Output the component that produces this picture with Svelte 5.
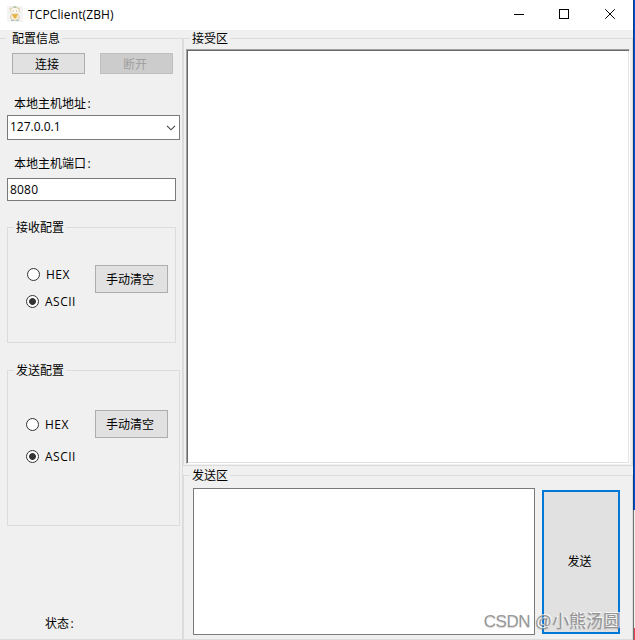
<script>
  let host = "127.0.0.1";
  let port = "8080";
  let recvMode = "ASCII";
  let sendMode = "ASCII";
  let received = "";
  let message = "";
  let connected = false;
</script>

<div class="screen">
  <main>
    <header>
      <svg class="logo" width="16" height="16" viewBox="0 0 16 16">
        <rect width="16" height="16" fill="#f5f4f4" />
        <circle cx="4" cy="2.8" r="1.5" fill="#e5d5b5" />
        <circle cx="11.6" cy="2.8" r="1.5" fill="#e5d5b5" />
        <ellipse cx="7.8" cy="5" rx="4.6" ry="3.6" fill="#fbf8ee" stroke="#ddd0b4" stroke-width=".8" />
        <path d="M6.5 0.3h3v1.5h-3z" fill="#a9bda0" />
        <path d="M5.5 5h1.2M9 5h1.2" stroke="#a5957b" stroke-width=".8" />
        <ellipse cx="7.8" cy="11.2" rx="4.4" ry="3.3" fill="#f6ebd0" stroke="#d8c7a4" stroke-width=".8" />
        <path d="M4.5 8.3h6.8l-1.4 1.7-.7 2.2H7L6 10z" fill="#e8b345" />
        <path d="M4 14.4h3M9 14.4h3" stroke="#a8c5c9" stroke-width="1.2" />
      </svg>
      <span class="title">TCPClient(ZBH)</span>
      <svg class="controls" width="138" height="30" viewBox="0 0 138 30" fill="none" stroke="#000">
        <path d="M19 14.5h10" />
        <rect x="64.5" y="9.5" width="9" height="9" />
        <path d="M110.2 9.2l9.6 9.6M119.8 9.2l-9.6 9.6" />
      </svg>
    </header>

    <div class="content">
      <fieldset class="config">
        <legend>配置信息</legend>
        <div class="buttons">
          <button on:click={() => (connected = true)}>连接</button>
          <button disabled={!connected}>断开</button>
        </div>

        <div class="label">本地主机地址<span class="colon">:</span></div>
        <div class="combo">
          <span>{host}</span>
          <svg width="10" height="6" viewBox="0 0 10 6"><path d="M1 .8l4 4 4-4" fill="none" stroke="#444" stroke-width="1.1" /></svg>
        </div>
        <div class="label second">本地主机端口<span class="colon">:</span></div>
        <input class="port" bind:value={port} />

        <fieldset class="mode recv">
          <legend>接收配置</legend>
          <div class="radios">
            <label class="shift"><input type="radio" value="HEX" bind:group={recvMode} />HEX</label>
            <label><input type="radio" value="ASCII" bind:group={recvMode} />ASCII</label>
          </div>
          <button on:click={() => (received = "")}>手动清空</button>
        </fieldset>

        <fieldset class="mode send">
          <legend>发送配置</legend>
          <div class="radios">
            <label><input type="radio" value="HEX" bind:group={sendMode} />HEX</label>
            <label><input type="radio" value="ASCII" bind:group={sendMode} />ASCII</label>
          </div>
          <button on:click={() => (message = "")}>手动清空</button>
        </fieldset>

        <div class="status">状态<span class="colon">:</span></div>
      </fieldset>

      <div class="right">
        <fieldset class="recv-area">
          <legend>接受区</legend>
          <textarea readonly bind:value={received}></textarea>
        </fieldset>
        <fieldset class="send-area">
          <legend>发送区</legend>
          <div class="send-row">
            <textarea bind:value={message}></textarea>
            <button class="primary">发送</button>
          </div>
        </fieldset>
      </div>
    </div>
  </main>
  <div class="edge">
    <div class="blue"></div>
    <div class="gray"></div>
    <div class="red"></div>
  </div>
  <div class="watermark"><span>CSDN</span> @小熊汤圆</div>
</div>

<style>
  :global(body) {
    margin: 0;
    overflow: hidden;
  }

  .screen {
    position: relative;
    display: flex;
    width: 635px;
    height: 640px;
    overflow: hidden;
    font: 12px/16px "Open Sans", "Noto Sans CJK SC", sans-serif;
    color: #000;
  }

  .screen * {
    box-sizing: border-box;
  }

  main {
    width: 633px;
    height: 640px;
    background: #f0f0f0;
  }

  header {
    display: flex;
    align-items: center;
    height: 30px;
    padding-left: 7px;
    background: #fff;
  }

  .logo {
    margin-top: -2px;
  }

  .title {
    margin-left: 5px;
    letter-spacing: 0.13px;
  }

  .controls {
    margin-left: auto;
  }

  .content {
    display: flex;
    height: 610px;
    padding-top: 2px;
  }

  fieldset {
    min-width: 0;
    margin: 0;
    padding: 0;
    border: 1px solid #dcdcdc;
  }

  legend {
    height: 13px;
    padding: 0 2px;
    line-height: 14px;
    white-space: nowrap;
  }

  button,
  input,
  textarea {
    margin: 0;
    padding: 0;
    font: inherit;
    color: inherit;
    border-radius: 0;
    outline: none;
  }

  button {
    padding: 1px 3px 0 0;
    background: #e1e1e1;
    border: 1px solid #adadad;
  }

  button:disabled {
    color: #a0a0a0;
    background: #ccc;
    border-color: #bfbfbf;
  }

  .config {
    width: 183px;
    height: 608px;
    border-left: 0;
  }

  .config > legend {
    margin-left: 6px;
    padding-left: 6px;
  }

  .buttons {
    display: flex;
    gap: 15px;
    padding: 8px 0 0 12px;
  }

  .buttons button {
    width: 73px;
    height: 21px;
    padding-top: 3px;
    line-height: 16px;
  }

  .label {
    margin: 22px 0 3px 14px;
    height: 16px;
  }

  .label.second {
    margin: 16px 0 6px 14px;
  }

  .colon {
    margin-left: 1.5px;
  }

  .combo {
    display: flex;
    align-items: center;
    justify-content: space-between;
    width: 173px;
    height: 25px;
    margin-left: 7px;
    padding: 0 3px 1px 2px;
    background: #fff;
    border: 1px solid #7a7a7a;
  }

  .combo svg {
    margin-top: 1px;
  }

  .port {
    display: block;
    width: 169px;
    height: 23px;
    margin-left: 7px;
    padding-left: 2px;
    background: #fff;
    border: 1px solid #7a7a7a;
    letter-spacing: 0.2px;
  }

  .mode {
    margin-left: 7px;
  }

  .mode legend {
    margin-left: 6px;
  }

  .recv {
    width: 169px;
    height: 122px;
    margin-top: 20px;
  }

  .send {
    width: 173px;
    height: 162px;
    margin-top: 21px;
  }

  .radios {
    float: left;
    width: 87px;
    padding-left: 18px;
    letter-spacing: 0.5px;
  }

  .radios label {
    display: flex;
    align-items: center;
    gap: 6px;
    height: 17px;
  }

  .radios .shift {
    margin-left: 1px;
  }

  .recv .radios {
    padding-top: 32px;
  }

  .recv label + label {
    margin-top: 10px;
  }

  .send .radios {
    padding-top: 39px;
  }

  .send label + label {
    margin-top: 15px;
  }

  input[type="radio"] {
    appearance: none;
    width: 13px;
    height: 13px;
    border: 1px solid #333;
    border-radius: 50%;
    background: #fff;
  }

  input[type="radio"]:checked {
    background: radial-gradient(circle, #333 3px, #fff 3.8px);
  }

  .mode button {
    width: 73px;
    height: 28px;
    margin-top: 31px;
  }

  .send button {
    margin-top: 33px;
  }

  .status {
    margin: 90px 0 0 45px;
  }

  .right {
    width: 450px;
  }

  .right legend {
    margin-left: 6px;
  }

  .recv-area {
    height: 434px;
  }

  textarea {
    display: block;
    resize: none;
    background: #fff;
  }

  .recv-area textarea {
    width: 444px;
    height: 415px;
    margin: 4px 0 0 2px;
    border: 1px solid;
    border-color: #a0a0a0 #fff #fff #a0a0a0;
    box-shadow: inset 1px 1px #696969, inset -1px -1px #e3e3e3;
  }

  .send-area {
    height: 171px;
    margin-top: 3px;
  }

  .send-row {
    display: flex;
    gap: 7px;
    padding: 6px 0 0 9px;
  }

  .send-row textarea {
    width: 342px;
    height: 147px;
    border: 1px solid #7a7a7a;
  }

  .primary {
    width: 78px;
    height: 144px;
    margin-top: 2px;
    padding-top: 0;
    border: 2px solid #0078d7;
  }

  .edge {
    display: flex;
    flex-direction: column;
    width: 2px;
  }

  .edge div {
    border-left: 1px solid #707070;
  }

  .edge .blue {
    height: 510px;
    border-color: #073c8c;
    background: #0551cc;
  }

  .edge .gray {
    height: 118px;
    background: #eee;
  }

  .edge .red {
    flex: 1;
    background: #e8414f;
  }

  .watermark {
    position: absolute;
    right: 15px;
    bottom: 6px;
    font: 17px/24px "Liberation Sans", "Noto Sans CJK SC", sans-serif;
    color: rgba(140, 140, 140, 0.9);
    text-shadow: 1px -1px 0 rgba(255, 255, 255, 0.75), 0 1px 1px rgba(110, 110, 110, 0.3);
    white-space: nowrap;
    pointer-events: none;
  }

  .watermark span {
    letter-spacing: -0.5px;
  }
</style>
